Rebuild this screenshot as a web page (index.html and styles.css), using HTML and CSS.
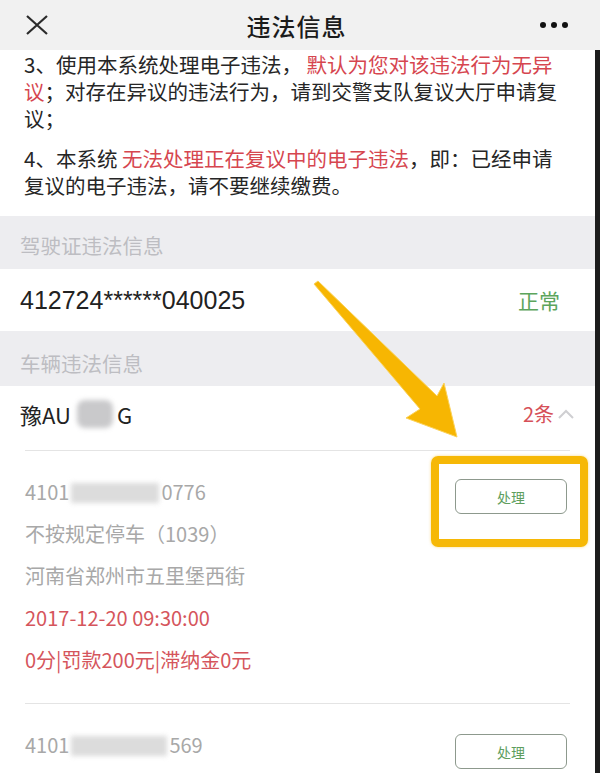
FILE: index.html
```html
<!DOCTYPE html>
<html lang="zh-CN">
<head>
    <meta charset="UTF-8">
    <meta name="viewport" content="width=device-width, initial-scale=1.0">
    <title>违法信息</title>
    <link rel="stylesheet" href="styles.css">
</head>
<body>
    <!-- 顶部导航 -->
    <header class="nav-bar">
        <svg class="nav-close" width="24" height="20" viewBox="0 0 24 20">
            <path d="M2 1 L22 19 M22 1 L2 19" stroke="#2b2b2b" stroke-width="2.2" fill="none"/>
        </svg>
        <h1 class="nav-title">违法信息</h1>
        <svg class="nav-more" width="28" height="8" viewBox="0 0 28 8">
            <circle cx="3" cy="4" r="3" fill="#111"/>
            <circle cx="14" cy="4" r="3" fill="#111"/>
            <circle cx="25" cy="4" r="3" fill="#111"/>
        </svg>
    </header>

    <main class="page">
        <!-- 须知 -->
        <section class="notice">
            <p>3、使用本系统处理电子违法， <span class="warn">默认为您对该违法行为无异议</span>；对存在异议的违法行为，请到交警支队复议大厅申请复议；</p>
            <p>4、本系统 <span class="warn">无法处理正在复议中的电子违法</span>，即：已经申请复议的电子违法，请不要继续缴费。</p>
        </section>

        <!-- 驾驶证 -->
        <div class="group-title">驾驶证违法信息</div>
        <div class="list-row">
            <span class="license-no">412724******040025</span>
            <span class="status-ok">正常</span>
        </div>

        <!-- 车辆 -->
        <div class="group-title group-title-tall">车辆违法信息</div>
        <div class="list-row plate-row">
            <span class="plate">豫AU<span class="mask mask-plate"></span>G</span>
            <span class="count">2条
                <svg class="caret" width="18" height="10" viewBox="0 0 18 10">
                    <path d="M2 9 L9 2 L16 9" stroke="#cfcfd2" stroke-width="2" fill="none"/>
                </svg>
            </span>
        </div>

        <ul class="records">
            <li class="record">
                <div class="record-info">
                    <span class="record-line record-no">4101<span class="mask mask-no"></span>0776</span>
                    <span class="record-line">不按规定停车（1039）</span>
                    <span class="record-line">河南省郑州市五里堡西街</span>
                    <span class="record-line red">2017-12-20 09:30:00</span>
                    <span class="record-line red">0分|罚款200元|滞纳金0元</span>
                </div>
                <button class="btn-handle">处理</button>
                <span class="highlight"></span>
            </li>
            <li class="record">
                <div class="record-info">
                    <span class="record-line record-no">4101<span class="mask mask-no mask-wide"></span>569</span>
                </div>
                <button class="btn-handle btn-second">处理</button>
            </li>
        </ul>
    </main>

    <!-- 提示箭头 -->
    <svg class="pointer-arrow" width="600" height="773" viewBox="0 0 600 773">
        <polygon points="314,284 318,281 437,396 444,383 457,437 406,418 420,409"
                 fill="#f7b602" stroke="#fbd25a" stroke-width="1" stroke-linejoin="round"/>
    </svg>
</body>
</html>
```

FILE: styles.css
```css
* {
    margin: 0;
    padding: 0;
    box-sizing: border-box;
}

body {
    width: 600px;
    height: 773px;
    overflow: hidden;
    position: relative;
    background: #fff;
    color: #333;
    font-family: "Noto Sans CJK SC", "Noto Sans", sans-serif;
}

/* 导航栏 */
.nav-bar {
    height: 50px;
    display: grid;
    grid-template-columns: 1fr auto 1fr;
    align-items: center;
    padding: 0 32px 0 25px;
    background: #f1f1f1;
}

.nav-title {
    font-size: 24px;
    font-weight: 500;
    color: #1b1b1b;
    letter-spacing: 1px;
}

.nav-more {
    justify-self: end;
}

.page {
    min-height: 723px;
    border-right: 5px solid #1d1d1d;
}

/* 须知 */
.notice {
    padding: 1px 31px 17px 24px;
    font-size: 20.5px;
    line-height: 27px;
    color: #262626;
}

.notice p + p {
    margin-top: 13px;
}

.warn {
    color: #d6464f;
}

/* 分组标题 */
.group-title {
    height: 53px;
    padding: 16px 20px 0;
    line-height: 27px;
    font-size: 20.5px;
    background: #ededf0;
    color: #bdbdc2;
}

.group-title-tall {
    height: 55px;
    padding-top: 19px;
}

.list-row {
    height: 62px;
    display: flex;
    justify-content: space-between;
    align-items: center;
    padding: 0 35px 0 20px;
}

.license-no {
    font-family: "Liberation Sans", "Noto Sans CJK SC", sans-serif;
    font-size: 25px;
    color: #222;
}

.status-ok {
    font-size: 21px;
    color: #5ca55c;
}

.plate-row {
    height: 64px;
    align-items: flex-start;
    padding: 14px 20px 0 20px;
    line-height: 28px;
}

.plate {
    font-size: 22px;
    color: #222;
    display: flex;
    align-items: center;
}

.count {
    font-size: 20px;
    color: #d65058;
    display: flex;
    align-items: center;
    gap: 3px;
}

/* 打码 */
.mask {
    display: inline-block;
    background: #dcdcdc;
    filter: blur(2.5px);
}

.mask-plate {
    width: 36px;
    height: 28px;
    margin: 0 4px 0 6px;
    background: #c9c9cb;
    border-radius: 8px;
}

.mask-no {
    width: 88px;
    height: 20px;
    margin: 0 2px;
    vertical-align: -3px;
}

.mask-wide {
    width: 96px;
}

/* 违法记录 */
.records {
    list-style: none;
    margin: 0 25px;
}

.record {
    position: relative;
    display: flex;
    justify-content: space-between;
    align-items: flex-start;
    padding: 20px 3px 22px 0;
    border-top: 1px solid #e4e4e4;
}

.record-info {
    display: flex;
    flex-direction: column;
}

.record-line {
    font-size: 20px;
    line-height: 42px;
    color: #a8a8a8;
}

.red {
    color: #d5555c;
}

.btn-handle {
    width: 112px;
    height: 35px;
    margin-top: 8px;
    background: #fff;
    border: 1.5px solid #8d998d;
    border-radius: 6px;
    color: #5e9e5e;
    font-family: inherit;
    font-size: 14px;
}

.btn-second {
    margin-top: 10px;
}

/* 标注框 */
.highlight {
    position: absolute;
    top: 5px;
    right: -18px;
    width: 157px;
    height: 91px;
    border: 8px solid #f6b806;
    border-radius: 7px;
    box-shadow: 0 0 3px rgba(246, 184, 6, 0.5);
}

.pointer-arrow {
    position: absolute;
    top: 0;
    left: 0;
    pointer-events: none;
}
```
